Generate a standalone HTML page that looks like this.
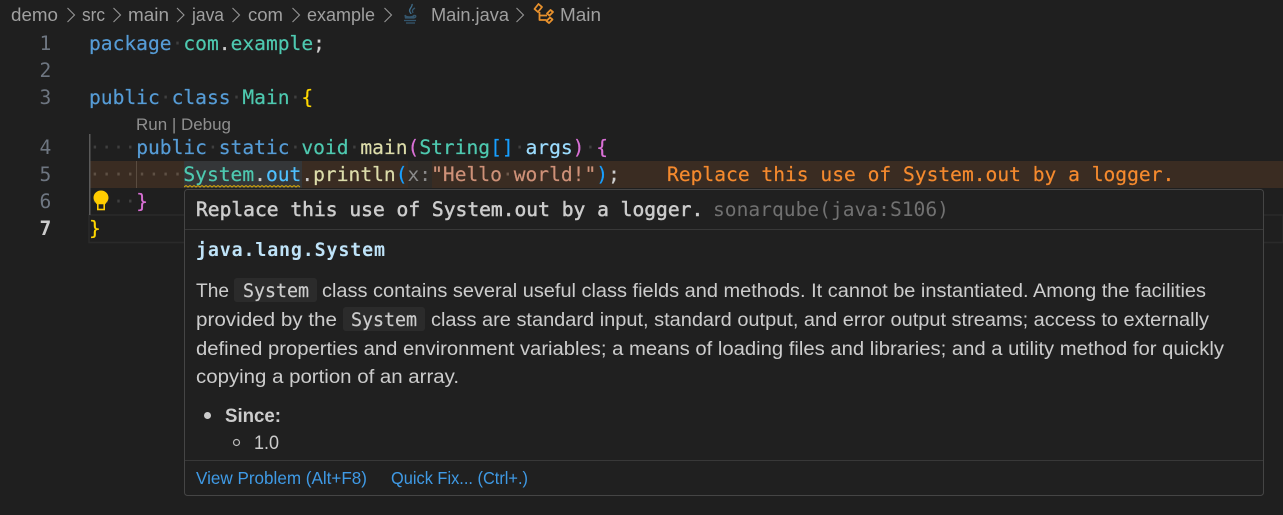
<!DOCTYPE html>
<html><head><meta charset="utf-8"><style>
html,body{margin:0;padding:0;background:#1f1f1f;width:1283px;height:515px;overflow:hidden}
svg{display:block}
.m{font-family:"DejaVu Sans Mono","Liberation Mono",monospace;font-size:19.6px}
.u{font-family:"Liberation Sans",sans-serif}
.c{stroke-width:.2px}
.d{fill:#3f3f3f}.k{fill:#569cd6;stroke:#569cd6}.t{fill:#4ec9b0;stroke:#4ec9b0}.f{fill:#dcdcaa;stroke:#dcdcaa}.v{fill:#9cdcfe;stroke:#9cdcfe}.s{fill:#ce9178;stroke:#ce9178}.y{fill:#ffd700;stroke:#ffd700}.p{fill:#da70d6;stroke:#da70d6}.b{fill:#179fff;stroke:#179fff}.w{fill:#cccccc;stroke:#cccccc}.o{fill:#4fc1ff;stroke:#4fc1ff}
.bc{font-size:18px;fill:#a0a0a0}
.h{font-size:19px;fill:#cccccc}
.l{font-size:17.5px;fill:#3f9ae5}
</style></head><body>
<svg width="1283" height="515" viewBox="0 0 1283 515" xmlns="http://www.w3.org/2000/svg">
<rect width="1283" height="515" fill="#1f1f1f"/>
<!-- breadcrumbs -->
<g class="u bc">
<text x="11" y="21" textLength="47" lengthAdjust="spacingAndGlyphs">demo</text>
<text x="82" y="21" textLength="23" lengthAdjust="spacingAndGlyphs">src</text>
<text x="128" y="21" textLength="41" lengthAdjust="spacingAndGlyphs">main</text>
<text x="192" y="21" textLength="32" lengthAdjust="spacingAndGlyphs">java</text>
<text x="248" y="21" textLength="35" lengthAdjust="spacingAndGlyphs">com</text>
<text x="307" y="21" textLength="68" lengthAdjust="spacingAndGlyphs">example</text>
<text x="431" y="21" textLength="78" lengthAdjust="spacingAndGlyphs">Main.java</text>
<text x="560" y="21" textLength="41" lengthAdjust="spacingAndGlyphs">Main</text>
</g>
<g fill="none" stroke="#959595" stroke-width="1.1">
<path d="M67.500 8l7 7-7 7"/><path d="M113.500 8l7 7-7 7"/><path d="M177 8l7 7-7 7"/><path d="M232.500 8l7 7-7 7"/><path d="M292.500 8l7 7-7 7"/><path d="M384.500 8l7 7-7 7"/><path d="M516.500 8l7 7-7 7"/>
</g>
<!-- java icon -->
<g fill="none" stroke="#34566d" stroke-width="1.3">
<path d="M412 4c1 3-4 5-2 8 .5 1 1 1.500 1 2" stroke="#41708f"/>
<path d="M415 8c-3 1.500-3 3-2 5"/>
<path d="M405 15c1 2.500 8 2.500 9 0l-.5 3h-8z" fill="#34566d"/>
<path d="M414 15.500c2.500-.5 2.500 2-.5 2.500"/>
<path d="M404 20.500h12"/><path d="M406 23h9"/>
</g>
<!-- class icon -->
<g fill="none" stroke="#e8912d" stroke-width="1.800" stroke-linejoin="round">
<path d="M538.500 4l3.500 3-4 5-3.500-3z"/>
<path d="M550.500 10l2.500 2-3.500 3.500-2.500-2z"/>
<path d="M550 17.500l2.500 2-3.500 3.500-2.500-2z"/>
<path d="M539.500 12v3.500h7.500M539.500 15.500v4.500h7"/>
</g>
<!-- current line borders -->
<rect x="89" y="215" width="1194" height="27.500" fill="none" stroke="#2a2a2a" stroke-width="1.500"/>
<!-- line 5 highlight -->
<rect x="89" y="161" width="1194" height="27" fill="#3a2c22"/>
<rect x="184" y="161" width="118" height="27" fill="#343638"/>
<rect x="408" y="161" width="24" height="27" fill="#2f2b27"/>
<!-- indent guides -->
<rect x="89" y="134" width="1.500" height="81" fill="#5a5a5a"/>
<rect x="136" y="161" width="1" height="27" fill="#5a4c40"/>
<!-- line numbers -->
<g class="m" fill="#6e7681">
<text x="39.500" y="50">1</text><text x="39.500" y="77">2</text><text x="39.500" y="104">3</text>
<text x="39.500" y="154">4</text><text x="39.500" y="181">5</text><text x="39.500" y="208">6</text>
<text x="39.500" y="235" fill="#cccccc" font-weight="700">7</text>
</g>
<!-- code -->
<g class="m c" xml:space="preserve">
<text x="89" y="50" xml:space="preserve"><tspan class="k">package</tspan><tspan class="d">·</tspan><tspan class="t">com</tspan><tspan class="w">.</tspan><tspan class="t">example</tspan><tspan class="w">;</tspan></text>
<text x="89" y="104" xml:space="preserve"><tspan class="k">public</tspan><tspan class="d">·</tspan><tspan class="k">class</tspan><tspan class="d">·</tspan><tspan class="t">Main</tspan><tspan class="d">·</tspan><tspan class="y">{</tspan></text>
<text x="89" y="154" xml:space="preserve"><tspan class="d">····</tspan><tspan class="k">public</tspan><tspan class="d">·</tspan><tspan class="k">static</tspan><tspan class="d">·</tspan><tspan class="t">void</tspan><tspan class="d">·</tspan><tspan class="f">main</tspan><tspan class="p">(</tspan><tspan class="t">String</tspan><tspan class="b">[]</tspan><tspan class="d">·</tspan><tspan class="v">args</tspan><tspan class="p">)</tspan><tspan class="d">·</tspan><tspan class="p">{</tspan></text>
<text x="89" y="181" xml:space="preserve"><tspan class="d" style="fill:#5e5044">········</tspan><tspan class="t">System</tspan><tspan class="w">.</tspan><tspan class="o">out</tspan><tspan class="w">.</tspan><tspan class="f">println</tspan><tspan class="b">(</tspan><tspan style="fill:#8a8a8a">x:</tspan><tspan class="s">"Hello</tspan><tspan class="d" style="fill:#6e5a4c">·</tspan><tspan class="s">world!"</tspan><tspan class="b">)</tspan><tspan class="w">;</tspan><tspan>    </tspan><tspan style="fill:#f58a2e;stroke:#f58a2e">Replace this use of System.out by a logger.</tspan></text>
<text x="89" y="208" xml:space="preserve"><tspan class="d">····</tspan><tspan class="p">}</tspan></text>
<text x="89" y="235" class="y">}</text>
</g>
<text class="u" x="136" y="130" font-size="16.500" fill="#8f8f8f" textLength="95" lengthAdjust="spacingAndGlyphs">Run | Debug</text>
<!-- squiggle -->
<clipPath id="sq"><rect x="184" y="183" width="118" height="7"/></clipPath>
<path d="M184 187l2-1.500 2 1.500 2-1.500 2 1.500 2-1.500 2 1.500 2-1.500 2 1.500 2-1.500 2 1.500 2-1.500 2 1.500 2-1.500 2 1.500 2-1.500 2 1.500 2-1.500 2 1.500 2-1.500 2 1.500 2-1.500 2 1.500 2-1.500 2 1.500 2-1.500 2 1.500 2-1.500 2 1.500 2-1.500 2 1.500 2-1.500 2 1.500 2-1.500 2 1.500 2-1.500 2 1.500 2-1.500 2 1.500 2-1.500 2 1.500 2-1.500 2 1.500 2-1.500 2 1.500 2-1.500 2 1.500 2-1.500 2 1.500 2-1.500 2 1.500 2-1.500 2 1.500 2-1.500 2 1.500 2-1.500 2 1.500 2-1.500 2 1.500" fill="none" stroke="#c79c10" stroke-width="1.100" clip-path="url(#sq)"/>
<!-- lightbulb -->
<path d="M101 190.500c-4.200 0-7.500 3.200-7.500 7.200 0 2.800 1.900 4.400 3.300 6.500h8.400c1.400-2.100 3.300-3.700 3.300-6.500 0-4-3.300-7.200-7.500-7.200z" fill="#ffcc00"/>
<rect x="97.800" y="203" width="6.400" height="6.500" fill="none" stroke="#ffcc00" stroke-width="1.600"/>
<!-- hover -->
<rect x="184.500" y="189.500" width="1079" height="306" rx="3" fill="#202020" stroke="#454545"/>
<rect x="185" y="229" width="1078" height="1" fill="#383838"/>
<rect x="185" y="460" width="1078" height="1" fill="#383838"/>
<text class="m" x="196" y="216" fill="#cccccc" stroke="#cccccc" stroke-width="0.500">Replace this use of System.out by a logger.</text>
<text class="m" x="713" y="216" fill="#717171">sonarqube(java:S106)</text>
<text class="m" x="196" y="256" font-weight="700" fill="#bfe3f8" style="font-size:18.300px" textLength="189">java.lang.System</text>
<rect x="234" y="278" width="83" height="24" rx="3" fill="#2b2b2b"/>
<rect x="343" y="307" width="82" height="24" rx="3" fill="#2b2b2b"/>
<g class="u h">
<text x="196" y="297" textLength="33" lengthAdjust="spacingAndGlyphs">The</text>
<text x="322" y="297" textLength="884" lengthAdjust="spacingAndGlyphs">class contains several useful class fields and methods. It cannot be instantiated. Among the facilities</text>
<text x="196" y="326" textLength="141" lengthAdjust="spacingAndGlyphs">provided by the</text>
<text x="431" y="326" textLength="778" lengthAdjust="spacingAndGlyphs">class are standard input, standard output, and error output streams; access to externally</text>
<text x="196" y="355" textLength="1028" lengthAdjust="spacingAndGlyphs">defined properties and environment variables; a means of loading files and libraries; and a utility method for quickly</text>
<text x="196" y="383" textLength="263" lengthAdjust="spacingAndGlyphs">copying a portion of an array.</text>
<text x="225" y="422" font-weight="700" textLength="56" lengthAdjust="spacingAndGlyphs">Since:</text>
<text x="254" y="449" textLength="25" lengthAdjust="spacingAndGlyphs">1.0</text>
</g>
<g class="m" style="font-size:18.270px" fill="#cccccc" stroke="#cccccc" stroke-width="0.200">
<text x="243" y="297">System</text>
<text x="351" y="326">System</text>
</g>
<circle cx="207.500" cy="415.500" r="3.500" fill="#cccccc"/>
<circle cx="236.500" cy="442.500" r="3" fill="none" stroke="#bbbbbb" stroke-width="1.200"/>
<g class="u l">
<text x="196" y="484" textLength="171" lengthAdjust="spacingAndGlyphs">View Problem (Alt+F8)</text>
<text x="391" y="484" textLength="137" lengthAdjust="spacingAndGlyphs">Quick Fix... (Ctrl+.)</text>
</g>
</svg>
</body></html>
